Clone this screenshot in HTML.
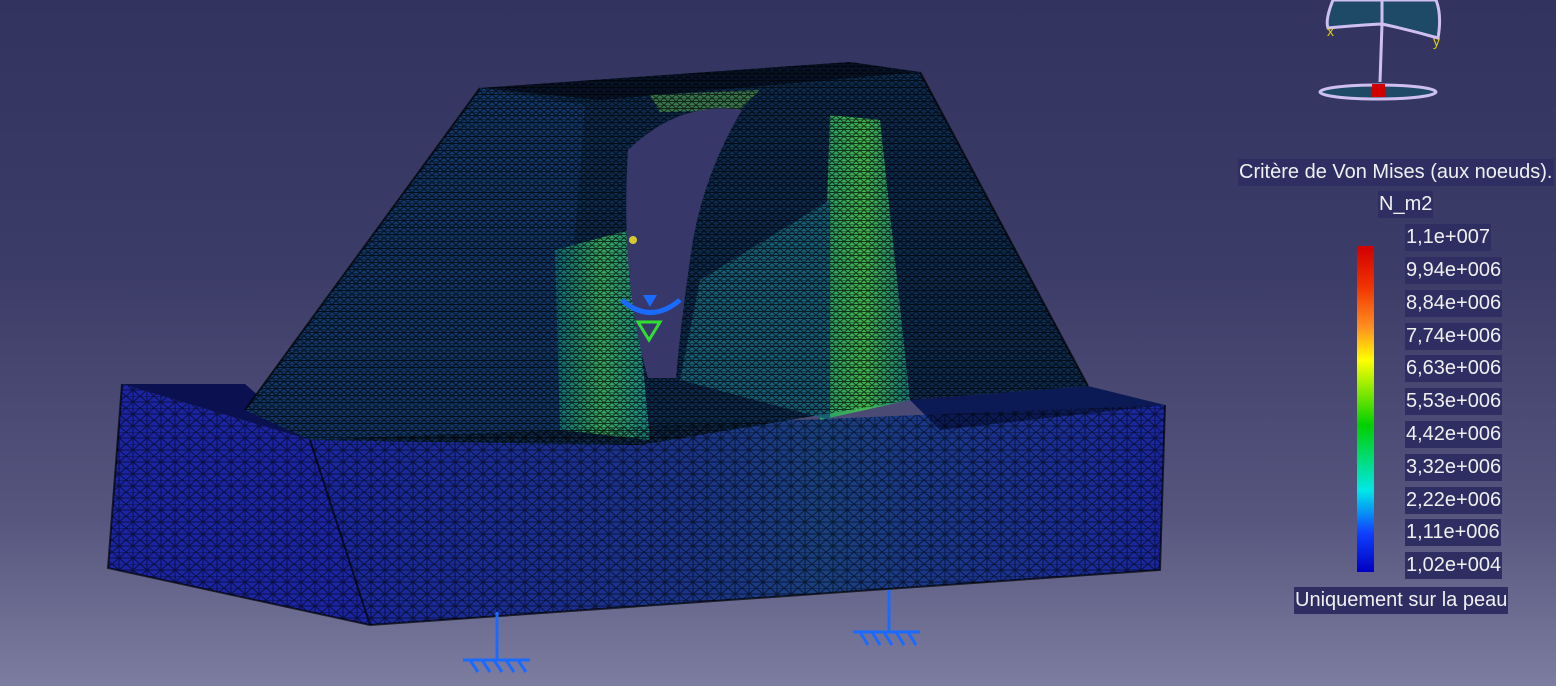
<!DOCTYPE html>
<html><head><meta charset="utf-8"><style>
html,body{margin:0;padding:0;width:1556px;height:686px;overflow:hidden}
body{background:linear-gradient(#33335f 0%,#3c3c68 40%,#55557e 75%,#7d7da0 100%);font-family:"Liberation Sans",sans-serif;position:relative}
.lb{position:absolute;background:#2e2e62;color:#f0f0f0;font-size:20px;line-height:27px;padding:0 1px;white-space:nowrap}
</style></head><body>
<svg width="1556" height="686" style="position:absolute;left:0;top:0">
<defs>
<pattern id="mesh" width="14" height="12" patternUnits="userSpaceOnUse">
<path d="M0 0L14 0M0 6L14 6M0 0L7 6L14 0M0 12L7 6L14 12M7 0L7 12" stroke="#000" stroke-width="1" fill="none" opacity="0.6"/>
</pattern>
<pattern id="mesh2" width="8" height="7" patternUnits="userSpaceOnUse">
<path d="M0 0L8 0M0 3.5L8 3.5M0 0L4 3.5L8 0M0 7L4 3.5L8 7" stroke="#000" stroke-width="1" fill="none" opacity="0.7"/>
</pattern>
<linearGradient id="lp" x1="0" y1="0" x2="1" y2="0"><stop offset="0" stop-color="#0f6a7a"/><stop offset="0.5" stop-color="#3aa860"/><stop offset="1" stop-color="#1a8a8a"/></linearGradient>
<linearGradient id="rp" x1="0" y1="0" x2="1" y2="0"><stop offset="0" stop-color="#2a9a6a"/><stop offset="0.5" stop-color="#44b850"/><stop offset="1" stop-color="#1a7a7a"/></linearGradient>
<linearGradient id="front" x1="0" y1="0" x2="1" y2="0"><stop offset="0" stop-color="#1a26a0"/><stop offset="0.45" stop-color="#1a3488"/><stop offset="0.6" stop-color="#1a4080"/><stop offset="1" stop-color="#1a26a0"/></linearGradient>
</defs>
<polygon points="122,384 310,440 370,625 108,568" fill="#1b25a4"/>
<polygon points="310,440 1165,405 1160,570 370,625" fill="url(#front)"/>
<polygon points="122,384 245,384 310,440" fill="#0a1050"/>
<polygon points="910,400 1088,386 1165,405 940,430" fill="#0b1a55"/>
<polygon points="480,88 850,62 920,72 1088,386 910,400 640,445 310,440 245,410" fill="#0c2c50"/>
<polygon points="480,88 585,105 560,430 310,440 245,410" fill="#113868"/>
<polygon points="480,88 850,62 920,72 600,100" fill="#08142a"/>
<polygon points="555,250 630,230 650,440 560,430" fill="url(#lp)"/>
<polygon points="830,115 880,120 910,400 820,420" fill="url(#rp)"/>
<polygon points="700,280 830,200 830,420 680,380" fill="#185e78"/>
<polygon points="650,95 760,90 740,110 660,112" fill="#3c7a50"/>
<polygon points="122,384 310,440 370,625 108,568" fill="url(#mesh)"/>
<polygon points="310,440 1165,405 1160,570 370,625" fill="url(#mesh)"/>
<polygon points="480,88 850,62 920,72 1088,386 910,400 640,445 310,440 245,410" fill="url(#mesh2)"/>
<path d="M628 150 Q680 100 742 110 Q700 180 690 260 Q680 330 676 378 L648 378 Q620 280 628 150Z" fill="#37376a"/>
<path d="M122,384 L108,568 L370,625 L1160,570 L1165,405 M310,440 L370,625 M480,88 L245,410 M920,72 L1088,386" stroke="#000" stroke-width="2" fill="none" opacity="0.7"/>
<path d="M622 300 Q650 325 680 300" stroke="#1a6aff" stroke-width="5" fill="none"/>
<polygon points="643,295 657,295 650,307" fill="#1a6aff"/>
<polygon points="638,322 660,322 649,340" fill="none" stroke="#30e030" stroke-width="3"/>
<circle cx="633" cy="240" r="4" fill="#d8c830"/>
<g stroke="#1a6aff" stroke-width="3" fill="none">
<path d="M497 612 V660 M463 660 H530 M470 660 L478 672 M482 660 L490 672 M494 660 L502 672 M506 660 L514 672 M518 660 L526 672"/>
<path d="M889 590 V632 M853 632 H920 M860 632 L868 645 M872 632 L880 645 M884 632 L892 645 M896 632 L904 645 M908 632 L916 645"/>
</g>
<path d="M1333 0 Q1325 20 1328 28 Q1360 25 1382 24 Q1410 30 1438 38 Q1442 15 1436 0Z" fill="#1e4a68" stroke="#d0c0f0" stroke-width="3"/>
<path d="M1382 0 V24 L1380 82" stroke="#d0c0f0" stroke-width="3" fill="none"/>
<ellipse cx="1378" cy="92" rx="58" ry="7" fill="#1e4a68" stroke="#d0c0f0" stroke-width="3"/>
<rect x="1372" y="84" width="13" height="13" fill="#d00000"/>
<text x="1327" y="36" fill="#e0d000" font-size="14">x</text>
<text x="1433" y="46" fill="#e0d000" font-size="14">y</text>
<defs><linearGradient id="cb" x1="0" y1="0" x2="0" y2="1">
<stop offset="0" stop-color="#d00000"/><stop offset="0.12" stop-color="#f03000"/><stop offset="0.25" stop-color="#ff9020"/><stop offset="0.35" stop-color="#ffff00"/><stop offset="0.55" stop-color="#00d000"/><stop offset="0.75" stop-color="#00e8e8"/><stop offset="0.88" stop-color="#1040ff"/><stop offset="1" stop-color="#0000c0"/></linearGradient></defs>
<rect x="1357" y="246" width="17" height="326" fill="url(#cb)"/>
</svg>
<div class="lb" style="left:1238px;top:159px">Critère de Von Mises (aux noeuds).</div>
<div class="lb" style="left:1378px;top:191px">N_m2</div>
<div class="lb" style="left:1405px;top:224px">1,1e+007</div>
<div class="lb" style="left:1405px;top:257px">9,94e+006</div>
<div class="lb" style="left:1405px;top:290px">8,84e+006</div>
<div class="lb" style="left:1405px;top:323px">7,74e+006</div>
<div class="lb" style="left:1405px;top:355px">6,63e+006</div>
<div class="lb" style="left:1405px;top:388px">5,53e+006</div>
<div class="lb" style="left:1405px;top:421px">4,42e+006</div>
<div class="lb" style="left:1405px;top:454px">3,32e+006</div>
<div class="lb" style="left:1405px;top:487px">2,22e+006</div>
<div class="lb" style="left:1405px;top:519px">1,11e+006</div>
<div class="lb" style="left:1405px;top:552px">1,02e+004</div>
<div class="lb" style="left:1294px;top:587px">Uniquement sur la peau</div>
</body></html>
